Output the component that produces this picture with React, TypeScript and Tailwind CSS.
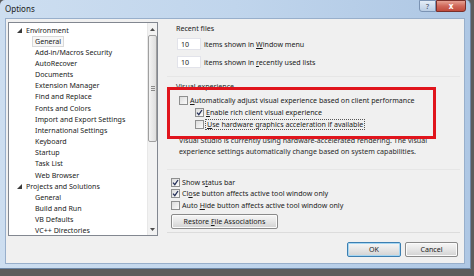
import { ReactNode } from "react";

const treeItems: { label: string; level: number }[] = [
  { label: "Environment", level: 0 },
  { label: "General", level: 1 },
  { label: "Add-in/Macros Security", level: 1 },
  { label: "AutoRecover", level: 1 },
  { label: "Documents", level: 1 },
  { label: "Extension Manager", level: 1 },
  { label: "Find and Replace", level: 1 },
  { label: "Fonts and Colors", level: 1 },
  { label: "Import and Export Settings", level: 1 },
  { label: "International Settings", level: 1 },
  { label: "Keyboard", level: 1 },
  { label: "Startup", level: 1 },
  { label: "Task List", level: 1 },
  { label: "Web Browser", level: 1 },
  { label: "Projects and Solutions", level: 0 },
  { label: "General", level: 1 },
  { label: "Build and Run", level: 1 },
  { label: "VB Defaults", level: 1 },
  { label: "VC++ Directories", level: 1 },
];

function CheckBox({ checked }: { checked?: boolean }) {
  return (
    <div className="w-[9px] h-[9px] shrink-0 border border-[#8e8f8f] bg-gradient-to-br from-[#dcdcdc] to-[#fbfbfb] flex items-center justify-center">
      {checked && (
        <svg width="7" height="7" viewBox="0 0 7 7">
          <path d="M1 3.6 L2.8 5.6 L6 1" fill="none" stroke="#26315a" strokeWidth="1.3" />
        </svg>
      )}
    </div>
  );
}

function CheckRow({
  checked,
  indent,
  children,
}: {
  checked?: boolean;
  indent: string;
  children: ReactNode;
}) {
  return (
    <div className={`flex items-center gap-[2px] h-[12px] ${indent}`}>
      <CheckBox checked={checked} />
      <span className="whitespace-nowrap">{children}</span>
    </div>
  );
}

function Button({
  children,
  width,
  primary,
}: {
  children: ReactNode;
  width: string;
  primary?: boolean;
}) {
  return (
    <div
      className={`${width} h-[15px] rounded-[2px] border flex items-center justify-center bg-gradient-to-b from-[#f6f6f6] via-[#e6e6e6] to-[#d2d2d2] ${
        primary
          ? "border-[#3c7fb1] shadow-[inset_0_0_0_1px_#a6d6f2]"
          : "border-[#8a8a8a] shadow-[inset_0_0_0_1px_#fbfbfb]"
      }`}
    >
      <span className="whitespace-nowrap">{children}</span>
    </div>
  );
}

export default function App() {
  return (
    <div className="relative w-[474px] h-[276px] bg-[#5c5c5c] overflow-hidden font-['Noto_Sans'] text-[7.1px] text-[#1b1b1b]">
      {/* window frame */}
      <div className="w-[471px] h-[269px] rounded-t-[5px] bg-gradient-to-r from-[#cddef0] via-[#c0d5ec] to-[#aec7e4] border-r border-b border-[#6d87a6] flex flex-col">
        <div className="h-[18px] flex items-center pl-[5px] relative">
          <span className="text-[8px] text-[#1a1a1a]">Options</span>
          <div className="ml-auto mr-[4px] self-start flex">
            <div className="w-[17px] h-[12px] border border-[#7b93b3] rounded-bl-[3px] bg-gradient-to-b from-[#e4edf7] to-[#b9cde4] flex items-center justify-center text-[7px] text-[#3b4a5e] leading-none">
              ?
            </div>
            <div className="w-[30px] h-[12px] border border-[#7a2f2a] rounded-br-[3px] bg-gradient-to-b from-[#e6a193] via-[#d0685a] to-[#c04a3b] flex items-center justify-center text-white text-[8px] font-bold leading-none">
              x
            </div>
          </div>
        </div>

        {/* client area */}
        <div className="mx-[5px] h-[246px] bg-[#f0f0f0] border border-[#98afcb] flex flex-col">
          <div className="flex">
            {/* tree */}
            <div className="ml-[2px] mt-[3px] w-[150px] h-[214px] bg-white border border-[#828790] flex">
              <div className="flex-1 pt-[1.5px]">
                {treeItems.map((item, i) => (
                  <div
                    key={i}
                    className={`h-[11.17px] leading-[11.17px] flex items-center whitespace-nowrap ${
                      item.level === 0 ? "pl-[8px]" : "pl-[26px]"
                    }`}
                  >
                    {item.level === 0 && (
                      <svg width="5" height="5" viewBox="0 0 5 5" className="mr-[4px]">
                        <polygon points="5,0 5,5 0,5" fill="#3a3a3a" />
                      </svg>
                    )}
                    <span
                      className={
                        i === 1
                          ? "px-[2px] -ml-[3px] border border-[#d9d9d9] bg-[#f7f7f7] leading-[9px]"
                          : ""
                      }
                    >
                      {item.label}
                    </span>
                  </div>
                ))}
              </div>
              {/* scrollbar */}
              <div className="w-[10px] bg-[#f2f2f2] border-l border-[#e8e8e8] flex flex-col items-center">
                <div className="h-[12px] flex items-center justify-center">
                  <svg width="5" height="3" viewBox="0 0 5 3">
                    <polygon points="2.5,0 5,3 0,3" fill="#4d4d4d" />
                  </svg>
                </div>
                <div className="w-[9px] h-[107px] rounded-[2px] border border-[#a0a0a0] bg-gradient-to-r from-[#f3f3f3] to-[#dedede] flex flex-col items-center justify-center gap-[1px]">
                  <div className="w-[4px] h-px bg-[#8a8a8a]" />
                  <div className="w-[4px] h-px bg-[#8a8a8a]" />
                  <div className="w-[4px] h-px bg-[#8a8a8a]" />
                </div>
                <div className="flex-1" />
                <div className="h-[12px] flex items-center justify-center">
                  <svg width="5" height="3" viewBox="0 0 5 3">
                    <polygon points="0,0 5,0 2.5,3" fill="#4d4d4d" />
                  </svg>
                </div>
              </div>
            </div>

            {/* right page */}
            <div className="ml-[9px] mt-[3px] flex-1 mr-[4px] flex flex-col">
              <div className="h-[11px] leading-[11px] mt-[1px] pl-[9px]">Recent files</div>
              <div className="flex items-center mt-[4px] ml-[10px] gap-[3px]">
                <div className="w-[24px] h-[12px] bg-white border border-[#e2e3ea] pl-[3px] leading-[10px]">10</div>
                <span>
                  items shown in <u>W</u>indow menu
                </span>
              </div>
              <div className="flex items-center mt-[6px] ml-[10px] gap-[3px]">
                <div className="w-[24px] h-[12px] bg-white border border-[#e2e3ea] pl-[3px] leading-[10px]">10</div>
                <span>
                  items shown in <u>r</u>ecently used lists
                </span>
              </div>
              <div className="mt-[8px] border-t border-[#e6e6e6]" />

              <div className="h-[11px] leading-[11px] mt-[3.5px] pl-[9px]">Visual experience</div>
              <div className="mt-[2.5px]">
                <CheckRow indent="ml-[12px]">
                  <u>A</u>utomatically adjust visual experience based on client performance
                </CheckRow>
                <CheckRow indent="ml-[28px]" checked>
                  <u>E</u>nable rich client visual experience
                </CheckRow>
                <div className="flex items-center gap-[1px] h-[12px] ml-[28px]">
                  <CheckBox />
                  <span className="whitespace-nowrap border border-dotted border-[#555] px-[1px] leading-[9px]">
                    <u>U</u>se hardware graphics acceleration if available
                  </span>
                </div>
              </div>
              <div className="mt-[4.5px] ml-[12px] leading-[11px] text-[#2a2a2a]">
                <div className="whitespace-nowrap">
                  Visual Studio is currently using hardware-accelerated rendering. The visual
                </div>
                <div className="whitespace-nowrap">
                  experience settings automatically change based on system capabilities.
                </div>
              </div>
              <div className="mt-[12px] border-t border-[#e6e6e6]" />

              <div className="mt-[7px] leading-[11.5px]">
                <div className="flex items-center gap-[2px] h-[11.5px] ml-[4px]">
                  <CheckBox checked />
                  <span>
                    Show s<u>t</u>atus bar
                  </span>
                </div>
                <div className="flex items-center gap-[2px] h-[11.5px] ml-[4px]">
                  <CheckBox checked />
                  <span>
                    Cl<u>o</u>se button affects active tool window only
                  </span>
                </div>
                <div className="flex items-center gap-[2px] h-[11.5px] ml-[4px]">
                  <CheckBox />
                  <span>
                    Auto <u>H</u>ide button affects active tool window only
                  </span>
                </div>
              </div>
              <div className="mt-[3px] ml-[4px]">
                <Button width="w-[107px]">
                  Restore <u>F</u>ile Associations
                </Button>
              </div>
              <div className="mt-[3px] border-t border-[#dcdcdc]" />
            </div>
          </div>

          <div className="mt-[6px] mr-[6px] flex justify-end gap-[4px]">
            <Button width="w-[54px]" primary>
              OK
            </Button>
            <Button width="w-[53px]">Cancel</Button>
          </div>
        </div>
      </div>

      {/* red annotation box */}
      <div className="absolute left-[167px] top-[87px] w-[269px] h-[52px] border-[3px] border-[#e0141c]" />
    </div>
  );
}
